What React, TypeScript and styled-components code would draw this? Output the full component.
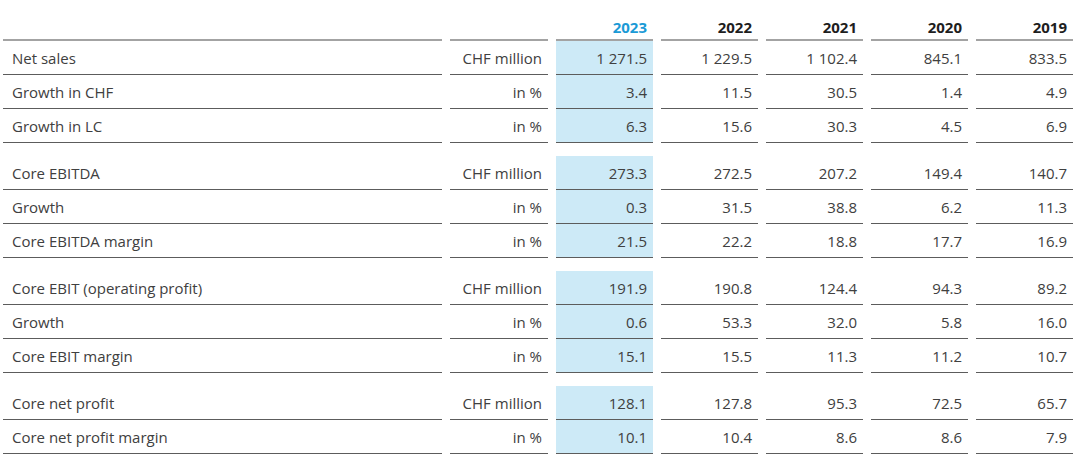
import { Fragment } from 'react';
import styled, { createGlobalStyle } from 'styled-components';

const GlobalStyle = createGlobalStyle`
    *, *::before, *::after {
        box-sizing: border-box;
    }
    html, body {
        margin: 0;
        padding: 0;
        background: #ffffff;
    }
    body {
        font-family: 'Open Sans', 'Noto Sans', sans-serif;
        color: #3b3b3b;
    }
`;

type Row = {
    label: string;
    unit: string;
    values: string[];
};

const years = ['2023', '2022', '2021', '2020', '2019'];

const sections: Row[][] = [
    [
        { label: 'Net sales', unit: 'CHF million', values: ['1 271.5', '1 229.5', '1 102.4', '845.1', '833.5'] },
        { label: 'Growth in CHF', unit: 'in %', values: ['3.4', '11.5', '30.5', '1.4', '4.9'] },
        { label: 'Growth in LC', unit: 'in %', values: ['6.3', '15.6', '30.3', '4.5', '6.9'] },
    ],
    [
        { label: 'Core EBITDA', unit: 'CHF million', values: ['273.3', '272.5', '207.2', '149.4', '140.7'] },
        { label: 'Growth', unit: 'in %', values: ['0.3', '31.5', '38.8', '6.2', '11.3'] },
        { label: 'Core EBITDA margin', unit: 'in %', values: ['21.5', '22.2', '18.8', '17.7', '16.9'] },
    ],
    [
        { label: 'Core EBIT (operating profit)', unit: 'CHF million', values: ['191.9', '190.8', '124.4', '94.3', '89.2'] },
        { label: 'Growth', unit: 'in %', values: ['0.6', '53.3', '32.0', '5.8', '16.0'] },
        { label: 'Core EBIT margin', unit: 'in %', values: ['15.1', '15.5', '11.3', '11.2', '10.7'] },
    ],
    [
        { label: 'Core net profit', unit: 'CHF million', values: ['128.1', '127.8', '95.3', '72.5', '65.7'] },
        { label: 'Core net profit margin', unit: 'in %', values: ['10.1', '10.4', '8.6', '8.6', '7.9'] },
    ],
];

const Page = styled.div`
    padding: 0 6px 0 3px;
    display: flex;
    flex-direction: column;
    gap: 13px;
`;

const Grid = styled.div`
    display: grid;
    grid-template-columns: 439px 98px repeat(5, 97px);
    column-gap: 8px;
`;

const HeadCell = styled.div<{ $current?: boolean }>`
    height: 41px;
    display: flex;
    align-items: flex-end;
    justify-content: flex-end;
    padding: 0 6px 2px 0;
    font-size: 15px;
    font-weight: 700;
    color: ${(p) => (p.$current ? '#1b9ad6' : '#1e1e1e')};
    border-bottom: 2px solid #a3a3a3;
`;

const Cell = styled.div<{ $align?: 'left' | 'right'; $current?: boolean }>`
    height: 34px;
    display: flex;
    align-items: center;
    justify-content: ${(p) => (p.$align === 'left' ? 'flex-start' : 'flex-end')};
    padding: ${(p) => (p.$align === 'left' ? '0 0 0 9px' : '0 6px 0 0')};
    font-size: 15px;
    color: #404040;
    background: ${(p) => (p.$current ? '#cdeaf7' : 'transparent')};
    border-bottom: 1px solid #5c5c5c;
    white-space: nowrap;
`;

export default function App() {
    return (
        <>
            <GlobalStyle />
            <Page>
                {sections.map((rows, si) => (
                    <Grid key={si}>
                        {si === 0 && (
                            <>
                                <HeadCell />
                                <HeadCell />
                                {years.map((y, i) => (
                                    <HeadCell key={y} $current={i === 0}>
                                        {y}
                                    </HeadCell>
                                ))}
                            </>
                        )}
                        {rows.map((row) => (
                            <Fragment key={row.label + row.unit}>
                                <Cell $align="left">{row.label}</Cell>
                                <Cell>{row.unit}</Cell>
                                {row.values.map((v, i) => (
                                    <Cell key={i} $current={i === 0}>
                                        {v}
                                    </Cell>
                                ))}
                            </Fragment>
                        ))}
                    </Grid>
                ))}
            </Page>
        </>
    );
}
